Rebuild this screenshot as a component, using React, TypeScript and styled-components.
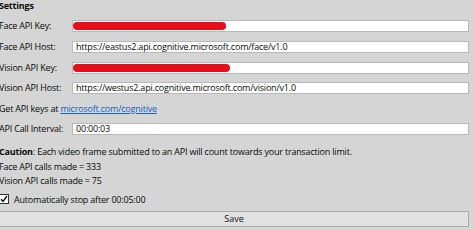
import React from 'react';
import styled, { createGlobalStyle } from 'styled-components';

const GlobalStyle = createGlobalStyle`
  html, body {
    margin: 0;
    padding: 0;
    background: #d5d5d5;
  }
  body {
    font-family: 'Open Sans', 'Noto Sans', sans-serif;
    font-size: 9px;
    letter-spacing: -0.2px;
    color: #0a0a0a;
  }
`;

const Panel = styled.div`
  width: 474px;
  height: 230px;
  box-sizing: border-box;
  padding: 0 4px 0 0;
  margin-left: -1px;
  overflow: hidden;
  display: flex;
  flex-direction: column;
`;

const Title = styled.div`
  font-weight: 700;
  height: 17px;
  line-height: 12px;
`;

const Field = styled.div<{ $gap?: number }>`
  display: grid;
  grid-template-columns: 73px 1fr;
  align-items: center;
  height: 13px;
  margin-top: ${({ $gap }) => $gap ?? 2}px;
  margin-bottom: 6px;
`;

const Label = styled.span`
  white-space: nowrap;
`;

const Input = styled.div`
  height: 12px;
  box-sizing: border-box;
  background: #fff;
  border: 1px solid #b9b9b9;
  padding: 0 3px;
  display: flex;
  align-items: center;
  white-space: nowrap;
  overflow: hidden;
  line-height: 12px;
`;

const Secret = styled.div<{ $width: number }>`
  height: 8px;
  width: ${({ $width }) => $width}px;
  margin-left: -3px;
  background: #e3101c;
  border-radius: 4px;
`;

const Line = styled.div<{ $gap?: number }>`
  margin-top: ${({ $gap }) => $gap ?? 0}px;
  line-height: 14px;
  white-space: nowrap;
`;

const Link = styled.a`
  color: #1464c0;
  text-decoration: underline;
`;

const CheckRow = styled.label`
  display: flex;
  align-items: center;
  gap: 5px;
  margin-top: 4px;
  height: 14px;
`;

const Box = styled.span`
  width: 10px;
  height: 10px;
  box-sizing: border-box;
  border: 1px solid #333;
  background: #fff;
  display: inline-flex;
  align-items: center;
  justify-content: center;
`;

const SaveButton = styled.button`
  margin-top: 5px;
  height: 16px;
  width: 100%;
  box-sizing: border-box;
  font: inherit;
  background: #e1e1e1;
  border: 1px solid #adadad;
  padding: 0;
  line-height: 12px;
  color: #111;
`;

export default function App() {
  return (
    <>
      <GlobalStyle />
      <Panel>
        <Title>Settings</Title>
        <Field>
          <Label>Face API Key:</Label>
          <Input>
            <Secret $width={153} />
          </Input>
        </Field>
        <Field>
          <Label>Face API Host:</Label>
          <Input>https://eastus2.api.cognitive.microsoft.com/face/v1.0</Input>
        </Field>
        <Field>
          <Label>Vision API Key:</Label>
          <Input>
            <Secret $width={157} />
          </Input>
        </Field>
        <Field $gap={1}>
          <Label>Vision API Host:</Label>
          <Input>https://westus2.api.cognitive.microsoft.com/vision/v1.0</Input>
        </Field>
        <Line $gap={2}>
          Get API keys at <Link href="#">microsoft.com/cognitive</Link>
        </Line>
        <Field $gap={6}>
          <Label>API Call Interval:</Label>
          <Input>00:00:03</Input>
        </Field>
        <Line $gap={4}>
          <strong>Caution</strong>: Each video frame submitted to an API will count towards your transaction limit.
        </Line>
        <Line $gap={1}>Face API calls made = 333</Line>
        <Line>Vision API calls made = 75</Line>
        <CheckRow>
          <Box>
            <svg width="8" height="8" viewBox="0 0 8 8">
              <path d="M1 4.2 L3 6.4 L7 1" fill="none" stroke="#111" strokeWidth="1.4" />
            </svg>
          </Box>
          Automatically stop after 00:05:00
        </CheckRow>
        <SaveButton>Save</SaveButton>
      </Panel>
    </>
  );
}
